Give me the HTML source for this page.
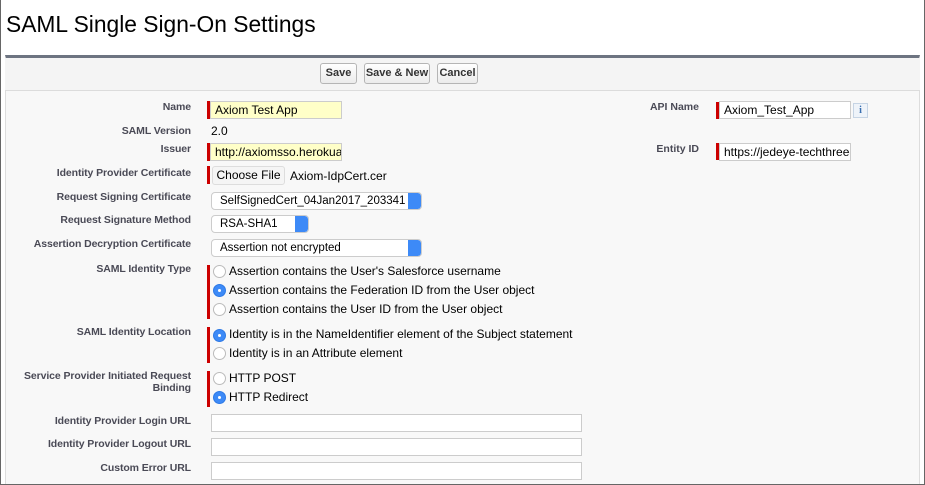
<!DOCTYPE html>
<html><head><style>
*{box-sizing:border-box;margin:0;padding:0}
body{width:925px;height:485px;background:#fff;font-family:"Liberation Sans",Arial,sans-serif;position:relative;overflow:hidden}
.frame{position:absolute;left:0;top:0;width:925px;height:485px;border:1px solid #666;border-top:none}
.a{position:absolute}
h1{position:absolute;left:6px;top:11px;font-size:22.8px;font-weight:normal;color:#000}
.panel{position:absolute;left:5px;top:55px;width:915px;height:430px;background:#f8f8f8;border-top:3px solid #6d7481;border-left:1px solid #ddd;border-right:1px solid #ddd}
.bar{position:absolute;left:5px;top:58px;width:915px;height:33px;background:#f4f4f4;border-bottom:1px solid #dcdcdc}
.btn{position:absolute;top:63px;height:21px;border:1px solid #b5b5b5;border-radius:3px;background:linear-gradient(#fff,#ececec);font-size:11px;font-weight:bold;color:#333;text-align:center;line-height:19px}
.lbl{position:absolute;right:734px;font-size:10.5px;letter-spacing:-0.1px;font-weight:bold;color:#4a4a56;text-align:right;line-height:12px}
.lbl2{position:absolute;right:226px;font-size:10.5px;font-weight:bold;color:#4a4a56;text-align:right}
.req{position:absolute;width:3px;background:#c00}
.inp{position:absolute;height:18px;border:1px solid #ccc;background:#fff;font-size:12px;color:#000;padding-left:4px;line-height:16px;white-space:nowrap;overflow:hidden}
.sel{position:absolute;height:18px;border:1px solid #ccc;border-radius:4px;background:#fff;font-size:11.5px;padding-left:8px;line-height:16px;overflow:hidden;white-space:nowrap}
.sel:after{content:"";position:absolute;right:0;top:0;width:13px;height:16px;background:#3d8af7;border-radius:0 3px 3px 0}
.txt{position:absolute;font-size:12px;color:#000;white-space:nowrap}
.rad{position:absolute;left:213px;width:13px;height:13px;border-radius:50%;border:1px solid #bbb;background:#fff}
.rad.on{background:#3d8af7;border-color:#2e7ae6}
.rad.on:after{content:"";position:absolute;left:4px;top:4px;width:3px;height:3px;border-radius:50%;background:#fff}
</style></head><body>
<h1>SAML Single Sign-On Settings</h1>
<div class="panel"></div>
<div class="bar"></div>
<div class="btn" style="left:320px;width:37px">Save</div>
<div class="btn" style="left:364px;width:66px">Save &amp; New</div>
<div class="btn" style="left:437px;width:41px">Cancel</div>

<div class="lbl" style="top:101px">Name</div>
<div class="req" style="left:207px;top:101px;height:18px"></div>
<div class="inp" style="left:210px;top:101px;width:132px;background:#ffffc8">Axiom Test App</div>
<div class="lbl" style="top:125px">SAML Version</div>
<div class="txt" style="left:211px;top:124px">2.0</div>
<div class="lbl" style="top:143px">Issuer</div>
<div class="req" style="left:207px;top:143px;height:18px"></div>
<div class="inp" style="left:210px;top:143px;width:132px;background:#ffffc8">http://axiomsso.herokuapp</div>
<div class="lbl" style="top:167px">Identity Provider Certificate</div>
<div class="req" style="left:207px;top:166px;height:18px"></div>
<div class="a" style="left:212px;top:166px;width:73px;height:19px;border:1px solid #ddd;border-radius:3px;background:#f5f5f5;font-size:12px;text-align:center;line-height:17px">Choose File</div>
<div class="txt" style="left:290px;top:169px">Axiom-IdpCert.cer</div>
<div class="lbl" style="top:191px">Request Signing Certificate</div>
<div class="sel" style="left:211px;top:192px;width:211px">SelfSignedCert_04Jan2017_203341</div>
<div class="lbl" style="top:214px">Request Signature Method</div>
<div class="sel" style="left:211px;top:215px;width:98px">RSA-SHA1</div>
<div class="lbl" style="top:238px">Assertion Decryption Certificate</div>
<div class="sel" style="left:211px;top:239px;width:211px">Assertion not encrypted</div>

<div class="lbl" style="top:263px">SAML Identity Type</div>
<div class="req" style="left:207px;top:265px;height:54px"></div>
<div class="rad" style="top:265px"></div><div class="txt" style="left:229px;top:264px">Assertion contains the User's Salesforce username</div>
<div class="rad on" style="top:284px"></div><div class="txt" style="left:229px;top:283px">Assertion contains the Federation ID from the User object</div>
<div class="rad" style="top:303px"></div><div class="txt" style="left:229px;top:302px">Assertion contains the User ID from the User object</div>
<div class="lbl" style="top:326px">SAML Identity Location</div>
<div class="req" style="left:207px;top:327px;height:36px"></div>
<div class="rad on" style="top:329px"></div><div class="txt" style="left:229px;top:327px">Identity is in the NameIdentifier element of the Subject statement</div>
<div class="rad" style="top:347px"></div><div class="txt" style="left:229px;top:346px">Identity is in an Attribute element</div>
<div class="lbl" style="top:370px">Service Provider Initiated Request<br>Binding</div>
<div class="req" style="left:207px;top:371px;height:36px"></div>
<div class="rad" style="top:372px"></div><div class="txt" style="left:229px;top:371px">HTTP POST</div>
<div class="rad on" style="top:391px"></div><div class="txt" style="left:229px;top:390px">HTTP Redirect</div>
<div class="lbl" style="top:415px">Identity Provider Login URL</div>
<div class="inp" style="left:211px;top:414px;width:371px"></div>
<div class="lbl" style="top:438px">Identity Provider Logout URL</div>
<div class="inp" style="left:211px;top:438px;width:371px"></div>
<div class="lbl" style="top:462px">Custom Error URL</div>
<div class="inp" style="left:211px;top:462px;width:371px"></div>

<div class="lbl2" style="top:101px">API Name</div>
<div class="req" style="left:716px;top:102px;height:17px"></div>
<div class="inp" style="left:719px;top:101px;width:132px">Axiom_Test_App</div>
<div class="a" style="left:853px;top:103px;width:15px;height:15px;border:1px solid #c6d4e4;background:#eef3f9;font-size:10px;font-weight:bold;color:#3a6fb0;text-align:center;line-height:13px;font-family:'Liberation Serif',serif">i</div>
<div class="lbl2" style="top:143px">Entity ID</div>
<div class="req" style="left:716px;top:143px;height:17px"></div>
<div class="inp" style="left:719px;top:143px;width:132px">https://jedeye-techthree-</div>
<div class="frame"></div>
</body></html>
